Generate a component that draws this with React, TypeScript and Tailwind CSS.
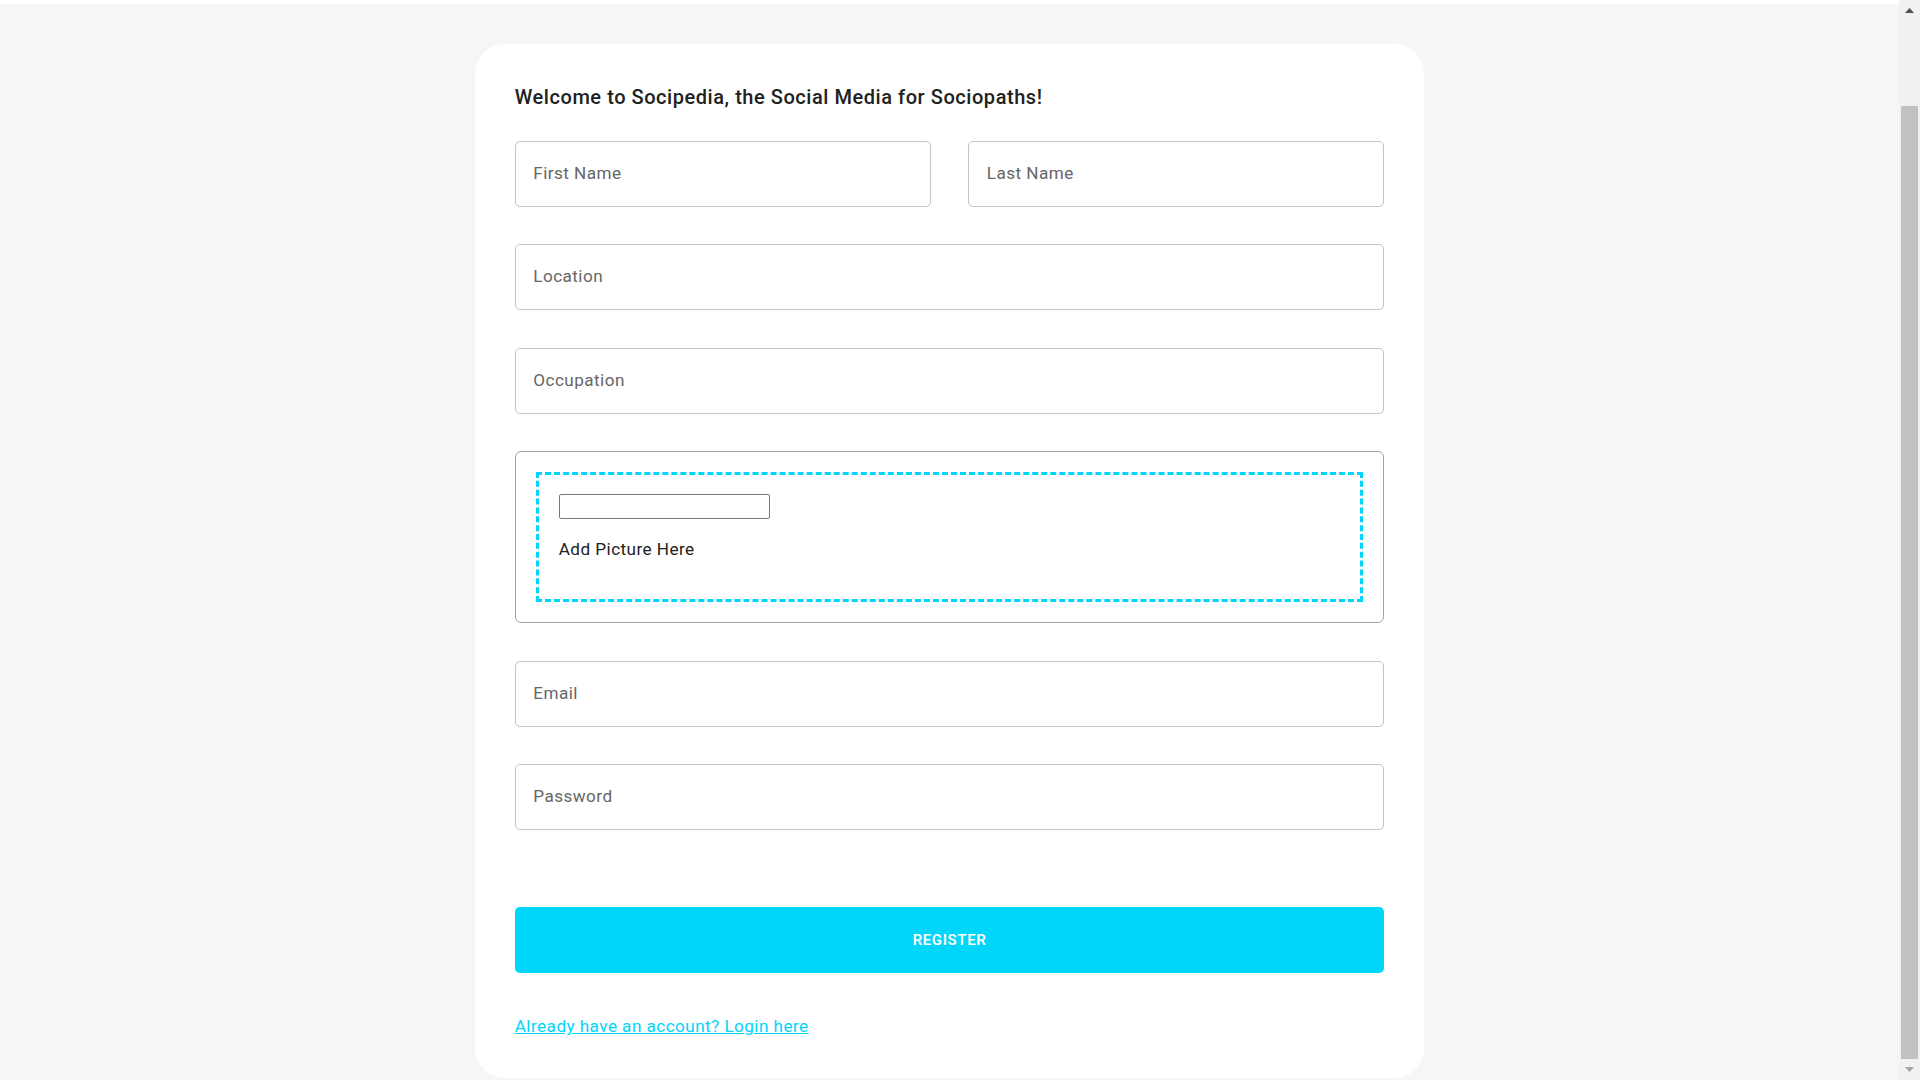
export default function App() {
  const font = { fontFamily: "Roboto, 'Noto Sans', sans-serif" };

  return (
    <div className="flex h-[1080px] w-full overflow-hidden" style={font}>
      {/* Page */}
      <div className="flex-1 bg-[#f6f6f6]">
        {/* bottom edge of the navbar, scrolled away */}
        <div className="h-[4px] bg-white" />

        <div className="mx-auto mt-[40px] w-1/2 rounded-[30px] bg-white p-[40px] pb-[38px]">
          <h5 className="mb-[30px] text-[20px] leading-[26.7px] font-medium tracking-[0.55px] text-[#212121]">
            Welcome to Socipedia, the Social Media for Sociopaths!
          </h5>

          <form className="grid grid-cols-4 gap-[37.5px]">
            <Field label="First Name" span="col-span-2" />
            <Field label="Last Name" span="col-span-2" />
            <Field label="Location" span="col-span-4" />
            <Field label="Occupation" span="col-span-4" />

            {/* Picture dropzone */}
            <div className="col-span-4 h-[172px] rounded-[6px] border border-[#a3a3a3] p-[20px]">
              <div className="h-full cursor-pointer border-[3px] border-dashed border-[#00d5fa] px-[20px] pt-[19px]">
                <div className="h-[25px] w-[211px] rounded-[2px] border border-[#767676] bg-white" />
                <p className="mt-[18px] text-[17.14px] leading-[25.7px] tracking-[0.45px] text-[#212121]">
                  Add Picture Here
                </p>
              </div>
            </div>

            <Field label="Email" span="col-span-4" />
            <Field label="Password" span="col-span-4" />
          </form>

          <button className="mt-[77px] flex h-[66px] w-full items-center justify-center rounded-[5px] bg-[#00d5fa] text-[15px] font-semibold tracking-[0.6px] text-white uppercase">
            Register
          </button>

          <p className="mt-[41px] text-[17.14px] leading-[25.7px] tracking-[0.45px]">
            <a className="cursor-pointer text-[#00d5fa] underline">
              Already have an account? Login here
            </a>
          </p>
        </div>
      </div>

      {/* Scrollbar */}
      <div className="flex w-[21px] flex-col bg-[#f1f1f1]">
        <div className="flex h-[21px] items-center justify-center">
          <svg width="9" height="5" viewBox="0 0 9 5">
            <path d="M4.5 0 L9 5 L0 5 Z" fill="#505050" />
          </svg>
        </div>
        <div className="flex flex-1 flex-col pt-[85px]">
          <div className="mx-[2px] flex-1 bg-[#c1c1c1]" />
        </div>
        <div className="flex h-[21px] items-center justify-center">
          <svg width="9" height="5" viewBox="0 0 9 5">
            <path d="M0 0 L9 0 L4.5 5 Z" fill="#a3a3a3" />
          </svg>
        </div>
      </div>
    </div>
  );
}

function Field({ label, span }: { label: string; span: string }) {
  return (
    <div
      className={`${span} flex h-[66px] items-center rounded-[5px] border border-[#c4c4c4] px-[17.5px]`}
    >
      <span className="text-[17.14px] tracking-[0.45px] text-[#666666]">{label}</span>
    </div>
  );
}
